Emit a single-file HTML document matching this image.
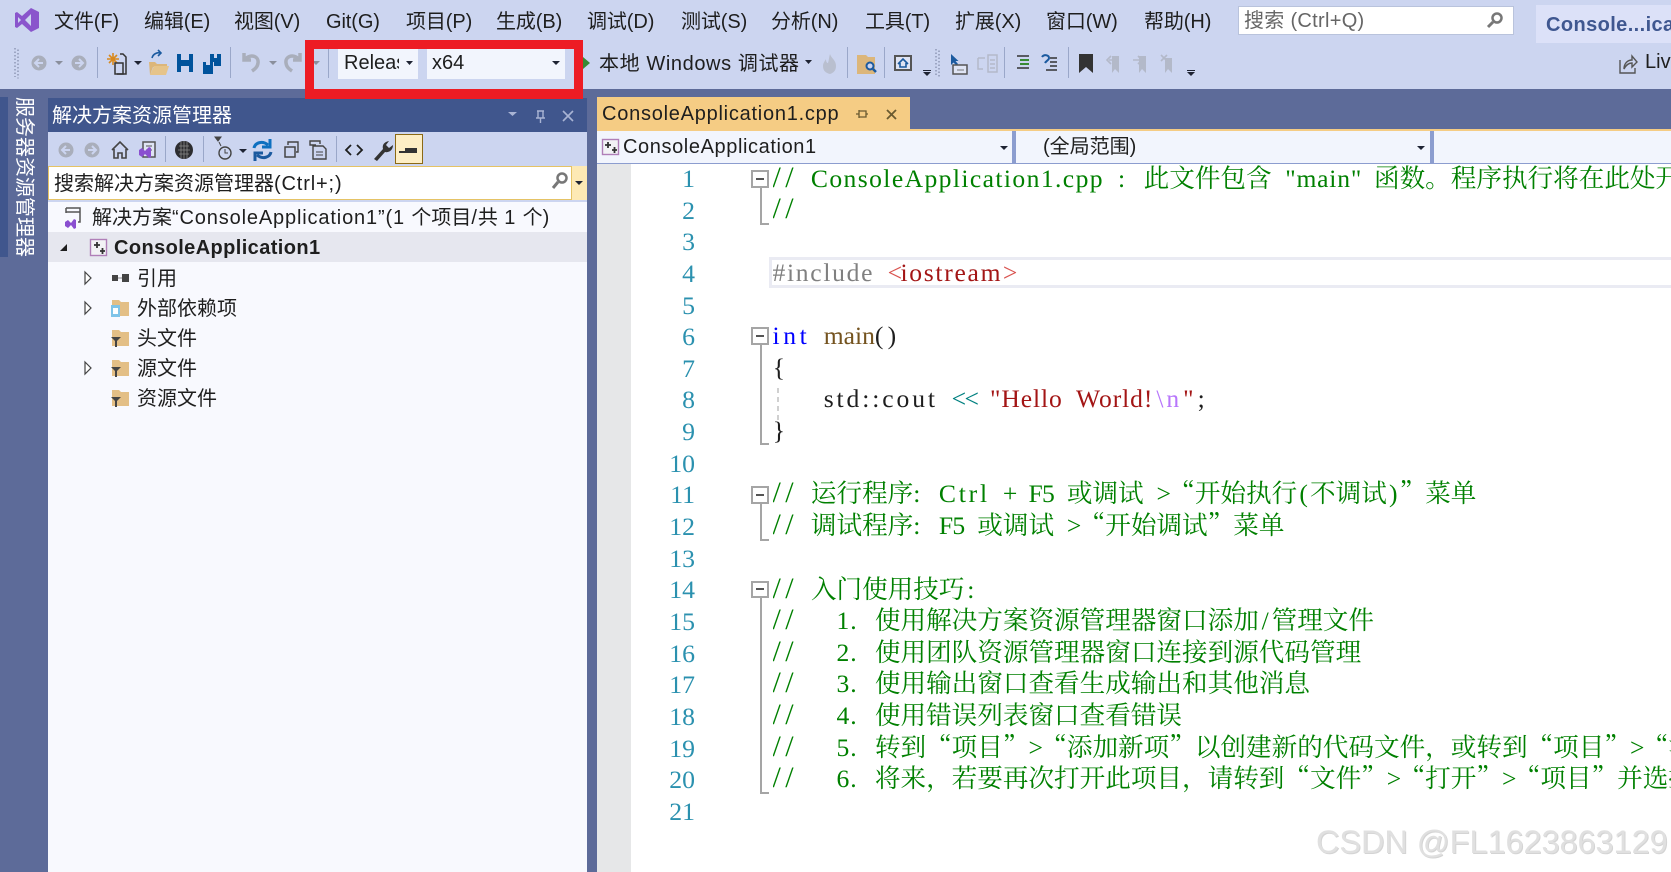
<!DOCTYPE html>
<html lang="zh-CN"><head><meta charset="utf-8"><title>ConsoleApplication1</title>
<style>
html,body{margin:0;padding:0}
body{width:1671px;height:872px;position:relative;overflow:hidden;background:#5d6b99;font-family:"Liberation Sans","Noto Sans CJK SC",sans-serif;font-size:20px;color:#1e1e1e}
.a{position:absolute;white-space:pre}
.t{position:absolute;white-space:pre;height:30px;line-height:30px}
.mn{letter-spacing:-.1px}
.w{letter-spacing:.85px}
.l{position:absolute;left:772.500px;height:32px;line-height:32px;white-space:pre;font-family:"Noto Serif CJK SC","Liberation Serif",serif;font-size:25.6px;color:#008000;width:898px;overflow:hidden}
.l i{display:inline-block;font-family:"Liberation Serif",serif;font-style:normal;word-spacing:6.4px;height:32px;overflow:visible}
.l i.w1{text-align:center}
.l i.s{font-size:30px;letter-spacing:4.4px}
.l i.s.w2{width:25.6px}.l i.s.w3{width:38.4px}.l i.s.w5{width:64px}
.w1{width:1ch}.w2{width:2ch}.w3{width:3ch}.w4{width:4ch}.w5{width:5ch}.w6{width:6ch}.w8{width:8ch}.w9{width:9ch}.w10{width:10ch}.w13{width:13ch}.w23{width:23ch}
.n{position:absolute;left:640px;width:55px;text-align:right;height:32px;line-height:32px;font-family:"Liberation Serif",serif;font-size:25.76px;color:#2b91af}
.k{color:#0000ff}.b{color:#74531f}.d{color:#1e1e1e}.r{color:#a31515}.g{color:#808080}.p{color:#b776fb}.o{color:#008080}.h{color:#d9534f}
</style></head><body>
<div class="a" style="left:0;top:0;width:1671px;height:89px;background:#ccd5f0"></div>
<div class="a" style="left:0;top:97px;width:8px;height:160px;background:#40568d"></div>
<div class="a" style="left:13px;top:97px;width:22px;height:160px;color:#fff;writing-mode:vertical-rl;text-orientation:sideways;line-height:22px;font-size:20px">服务器资源管理器</div>

<div class="t mn" style="left:54px;top:7px">文件(F)</div>
<div class="t mn" style="left:144px;top:7px">编辑(E)</div>
<div class="t mn" style="left:234px;top:7px">视图(V)</div>
<div class="t mn" style="left:326px;top:7px">Git(G)</div>
<div class="t mn" style="left:406px;top:7px">项目(P)</div>
<div class="t mn" style="left:496px;top:7px">生成(B)</div>
<div class="t mn" style="left:587px;top:7px">调试(D)</div>
<div class="t mn" style="left:681px;top:7px">测试(S)</div>
<div class="t mn" style="left:771px;top:7px">分析(N)</div>
<div class="t mn" style="left:865px;top:7px">工具(T)</div>
<div class="t mn" style="left:955px;top:7px">扩展(X)</div>
<div class="t mn" style="left:1046px;top:7px">窗口(W)</div>
<div class="t mn" style="left:1144px;top:7px">帮助(H)</div>
<div class="a" style="left:1238px;top:6px;width:274px;height:27px;background:#fff;border:1px solid #b9c3dc"></div>
<div class="t" style="left:1244px;top:6px;color:#666;letter-spacing:.3px">搜索 (Ctrl+Q)</div>
<div class="a" style="left:1536px;top:5px;width:135px;height:38px;background:#dce1f8"></div>
<div class="t" style="left:1546px;top:10px;font-weight:bold;color:#3f5790;letter-spacing:.4px;width:125px;overflow:hidden">Console...ica</div>

<div class="a" style="left:338px;top:49px;width:80px;height:30px;background:#f2f5fd"></div>
<div class="a" style="left:427px;top:49px;width:138px;height:30px;background:#f2f5fd"></div>
<div class="t" style="left:344px;top:48px;width:55px;overflow:hidden">Release</div>
<div class="t" style="left:432px;top:48px">x64</div>
<div class="t" style="left:599px;top:49px;letter-spacing:.6px">本地 Windows 调试器</div>
<div class="t" style="left:1645px;top:47px;width:26px;overflow:hidden">Live</div>

<div class="a" style="left:48px;top:98px;width:539px;height:34px;background:#40568d"></div>
<div class="a" style="left:52px;top:101px;height:30px;line-height:30px;color:#fff">解决方案资源管理器</div>
<div class="a" style="left:48px;top:132px;width:539px;height:34px;background:#ccd5f0"></div>
<div class="a" style="left:395px;top:134px;width:26px;height:28px;background:#fdeec5;border:1px solid #8b6914"></div>
<div class="a" style="left:48px;top:200px;width:539px;height:672px;background:#f8f9fe"></div>
<div class="a" style="left:48px;top:166px;width:537px;height:32px;background:#fff;border:1px solid #e5c365"></div>
<div class="a" style="left:571px;top:166px;width:16px;height:34px;background:#fde9b4;border-left:1px solid #e5c365;box-sizing:border-box"></div>
<div class="t" style="left:54px;top:169px">搜索解决方案资源管理器<span class="w">(Ctrl+;)</span></div>
<div class="a" style="left:48px;top:200px;width:539px;height:2px;background:#ccd5f0"></div>
<div class="t" style="left:92px;top:203px">解决方案<span class="w">“ConsoleApplication1”(1 </span>个项目<span class="w">/</span>共<span class="w"> 1 </span>个<span class="w">)</span></div>
<div class="a" style="left:48px;top:232px;width:539px;height:30px;background:#e6e7ef"></div>
<div class="t" style="left:114px;top:233px;font-weight:bold;letter-spacing:.4px">ConsoleApplication1</div>
<div class="t" style="left:137px;top:264px">引用</div>
<div class="t" style="left:137px;top:294px">外部依赖项</div>
<div class="t" style="left:137px;top:324px">头文件</div>
<div class="t" style="left:137px;top:354px">源文件</div>
<div class="t" style="left:137px;top:384px">资源文件</div>

<div class="a" style="left:597px;top:97px;width:313px;height:32px;background:#f5cc84"></div>
<div class="t" style="left:602px;top:99px;letter-spacing:.75px">ConsoleApplication1.cpp</div>
<div class="a" style="left:597px;top:129px;width:1074px;height:2px;background:#f5cc84"></div>
<div class="a" style="left:597px;top:131px;width:1074px;height:33px;background:#8c9dcf"></div>
<div class="a" style="left:597px;top:131px;width:415px;height:32px;background:#f2f5fd"></div>
<div class="a" style="left:1016px;top:131px;width:414px;height:32px;background:#f2f5fd"></div>
<div class="a" style="left:1434px;top:131px;width:237px;height:32px;background:#f2f5fd"></div>
<div class="t" style="left:623px;top:132px;letter-spacing:.6px">ConsoleApplication1</div>
<div class="t" style="left:1043px;top:132px">(全局范围)</div>

<div class="a" style="left:597px;top:164px;width:34px;height:708px;background:#e6e7e8"></div>
<div class="a" style="left:631px;top:164px;width:1040px;height:708px;background:#fff"></div>
<div class="a" style="left:769px;top:257px;width:902px;height:25px;border:3px solid #eaebf3;border-right:0"></div>

<div class="n" style="top:163px">1</div><div class="n" style="top:195px">2</div><div class="n" style="top:226px">3</div><div class="n" style="top:258px">4</div><div class="n" style="top:290px">5</div><div class="n" style="top:321px">6</div><div class="n" style="top:353px">7</div><div class="n" style="top:384px">8</div><div class="n" style="top:416px">9</div><div class="n" style="top:448px">10</div><div class="n" style="top:479px">11</div><div class="n" style="top:511px">12</div><div class="n" style="top:543px">13</div><div class="n" style="top:574px">14</div><div class="n" style="top:606px">15</div><div class="n" style="top:638px">16</div><div class="n" style="top:669px">17</div><div class="n" style="top:701px">18</div><div class="n" style="top:733px">19</div><div class="n" style="top:764px">20</div><div class="n" style="top:796px">21</div>

<div class="l" style="top:161px"><i class="s w3">//</i><i class="w23" style="letter-spacing:1.4px">ConsoleApplication1.cpp</i><i class="w3"> :</i>此文件包含<i class="w8" style="letter-spacing:.8px"> "main" </i>函数。程序执行将在此处开始并结束。</div>
<div class="l" style="top:192px"><i class="s w2">//</i></div>
<div class="l" style="top:255px"><i class="g w9" style="letter-spacing:1.7px">#include </i><i class="h w1" style="letter-spacing:-1.6px">&lt;</i><i class="r w8" style="letter-spacing:1.7px">iostream</i><i class="h w1" style="letter-spacing:-1.6px">&gt;</i></div>
<div class="l" style="top:318px"><i class="k w4" style="letter-spacing:3.6px">int</i><i class="b w4">main</i><i class="d w2" style="letter-spacing:4.2px">()</i></div>
<div class="l" style="top:350px"><i class="d w1">{</i></div>
<div class="l" style="top:381px"><i class="w4">&nbsp;</i><i class="d w10" style="letter-spacing:2.9px">std::cout</i><i class="o w3" style="letter-spacing:-1.6px">&lt;&lt;</i><i class="r w13" style="letter-spacing:.9px">"Hello World!</i><i class="p w2" style="letter-spacing:2.8px">\n</i><i class="r w1">"</i><i class="d w1">;</i></div>
<div class="l" style="top:413px"><i class="d w1">}</i></div>
<div class="l" style="top:476px"><i class="s w3">//</i>运行程序<i class="w2">:</i><i class="w5" style="letter-spacing:2.8px">Ctrl</i><i class="w2">+</i><i class="w3" style="letter-spacing:-.7px">F5</i>或调试<i class="w1">&nbsp;</i><i class="w1">&gt;</i>“开始执行<i class="w1">(</i>不调试<i class="w1">)</i>”菜单</div>
<div class="l" style="top:508px"><i class="s w3">//</i>调试程序<i class="w2">:</i><i class="w3" style="letter-spacing:-.7px">F5</i>或调试<i class="w1">&nbsp;</i><i class="w1">&gt;</i>“开始调试”菜单</div>
<div class="l" style="top:572px"><i class="s w3">//</i>入门使用技巧<i class="w1">:</i></div>
<div class="l" style="top:603px"><i class="s w5">//</i><i class="w3" style="letter-spacing:1px">1.</i>使用解决方案资源管理器窗口添加<i class="w1">/</i>管理文件</div>
<div class="l" style="top:635px"><i class="s w5">//</i><i class="w3" style="letter-spacing:1px">2.</i>使用团队资源管理器窗口连接到源代码管理</div>
<div class="l" style="top:666px"><i class="s w5">//</i><i class="w3" style="letter-spacing:1px">3.</i>使用输出窗口查看生成输出和其他消息</div>
<div class="l" style="top:698px"><i class="s w5">//</i><i class="w3" style="letter-spacing:1px">4.</i>使用错误列表窗口查看错误</div>
<div class="l" style="top:730px"><i class="s w5">//</i><i class="w3" style="letter-spacing:1px">5.</i>转到“项目”<i class="w1">&gt;</i>“添加新项”以创建新的代码文件&#65292;或转到“项目”<i class="w1">&gt;</i>“添加现有项”以将现有代码文件添加到项目</div>
<div class="l" style="top:761px"><i class="s w5">//</i><i class="w3" style="letter-spacing:1px">6.</i>将来&#65292;若要再次打开此项目&#65292;请转到“文件”<i class="w1">&gt;</i>“打开”<i class="w1">&gt;</i>“项目”并选择<i class="w6"> .sln </i>文件</div>

<svg class="a" style="left:0;top:0" width="1671" height="872" viewBox="0 0 1671 872" fill="none">
<!-- VS logo -->
<path fill-rule="evenodd" d="M31 8l8 4v16l-8 4-9-8-5 4-2-1V13l2-1 5 4zM18 17v6l3-3zM31 14l-6 6 6 6z" fill="#8a55cc"/>
<!-- grips -->
<g stroke="#8f98b5" stroke-width="1.500" stroke-dasharray="1.500 2"><path d="M15 48v29M18 49.500v29M936 49v28M939 50.500v28"/></g>
<!-- separators -->
<g fill="#9aa7c9"><rect x="97" y="47" width="1" height="31"/><rect x="230" y="47" width="1" height="31"/><rect x="328" y="47" width="1" height="31"/><rect x="847" y="47" width="1" height="31"/><rect x="884" y="47" width="1" height="31"/><rect x="1004" y="47" width="1" height="31"/><rect x="1068" y="47" width="1" height="31"/><rect x="165" y="136" width="1" height="26"/><rect x="203" y="136" width="1" height="26"/><rect x="336" y="136" width="1" height="26"/></g>
<!-- back / forward -->
<g fill="#a9aebb"><circle cx="39" cy="63" r="7.500"/><circle cx="79" cy="63" r="7.500"/><circle cx="66" cy="150" r="7.500"/><circle cx="92" cy="150" r="7.500"/></g>
<g stroke="#ccd5f0" stroke-width="2"><path d="M43 63h-7M39 59l-4 4 4 4M75 63h7M79 59l4 4-4 4M70 150h-7M66 146l-4 4 4 4M88 150h7M92 146l4 4-4 4"/></g>
<!-- small dropdowns -->
<g fill="#8a8f9c"><path d="M55 61h8l-4 4zM269 61h8l-4 4zM312 61h8l-4 4z"/></g>
<g fill="#1e2333"><path d="M134 61h8l-4 4zM239 149h8l-4 4zM406 61h7l-3.500 4zM552 61h8l-4 4zM805 60h7l-3.500 4zM575 181h8l-4 4zM1000 146h8l-4 4zM1417 146h8l-4 4zM923 70h8v1h-8zM923 72h8l-4 4zM1187 70h8v1h-8zM1187 72h8l-4 4z"/></g>
<!-- new project -->
<g><path d="M109 55l8 8M117 55l-8 8M113 53v12M107 59h12" stroke="#d8891e" stroke-width="1.600"/><path d="M120 54h3l3 3v17h-9" stroke="#333" stroke-width="1.500"/><rect x="115" y="63" width="8" height="11" stroke="#333" stroke-width="1.500"/></g>
<!-- open folder -->
<path d="M149 62h6l2 2h10v3h-14l-3 8z" fill="#dcb67a"/><path d="M150 75l4-9h15l-3 9z" fill="#e6c48a"/><path d="M152 58c1-4 5-6 9-5M158 50l3 3-3 3" stroke="#1b5a9f" stroke-width="1.600"/>
<!-- save -->
<path d="M177 54h16v18h-16z" fill="#00539c"/><rect x="181" y="54" width="8" height="6" fill="#ccd5f0"/><rect x="181" y="66" width="8" height="6" fill="#ccd5f0"/>
<path d="M203 62h10v12h-10zM210 54h11v12h-7v-4h-4z" fill="#00539c"/><rect x="206" y="62" width="4" height="3" fill="#ccd5f0"/><rect x="214" y="54" width="3" height="4" fill="#ccd5f0"/>
<!-- undo redo -->
<path d="M244 53v7h7M245 59c7-6 14-2 13 4-.5 4-3 6-6 8" stroke="#a9aebb" stroke-width="3.500"/>
<path d="M300 53v7h-7M299 59c-7-6-14-2-13 4 .5 4 3 6 6 8" stroke="#a9aebb" stroke-width="3.500"/>
<!-- play, flame -->
<path d="M583 57l7 6-7 6z" fill="#388a34"/>
<path d="M830 54c1 4 6 6 6 12 0 5-3 7-6 8-4-1-7-3-7-8 0-3 2-5 3-7 0 3 1 4 2 4 1-3 1-6 2-9z" fill="#b9bfcf"/>
<!-- find folder -->
<path d="M857 55h9l2 2h7v17h-18z" fill="#dcb67a"/><circle cx="870" cy="66" r="3.500" stroke="#1b5a9f" stroke-width="2" fill="#ccd5f0"/><path d="M873 69l3 3" stroke="#1b5a9f" stroke-width="2.500"/>
<!-- home window -->
<rect x="895" y="56" width="16" height="14" fill="#dfe4f4" stroke="#555" stroke-width="2"/><path d="M898 64l5-5 5 5M900 63v4h6v-4" stroke="#1b5a9f" stroke-width="1.600"/>
<!-- cursor and box -->
<path d="M951 54v11l2.500-2.500 3 3 1.500-1.500-2.500-3h3z" fill="#1b5a9f"/><rect x="953" y="65" width="14" height="9" fill="#dfe4f4" stroke="#555" stroke-width="1.500"/><path d="M957 70h7" stroke="#777"/>
<path d="M978 58h7M978 58v11h5M988 55h9v17h-9zM990 60h5M990 64h5M990 68h5" stroke="#b3b9c9" stroke-width="1.500"/>
<!-- format -->
<path d="M1017 56h12M1020 60h9M1020 64h9M1017 68h12" stroke="#333" stroke-width="1.500"/><path d="M1020 60h9M1020 64h9" stroke="#388a34" stroke-width="2"/>
<path d="M1042 57c2-3 7-2 7 1 0 2-3 3-4 5" stroke="#1b5a9f" stroke-width="2"/><path d="M1050 58h7M1050 62h7M1050 66h7M1046 70h11" stroke="#333" stroke-width="1.500"/>
<!-- bookmarks -->
<path d="M1079 54h14v19l-7-6-7 6z" fill="#333"/>
<path d="M1112 56h7v17l-4-4-3 4z" fill="#b3b9c9"/><path d="M1117 60h-8M1111 56l-4 4 4 4" stroke="#b3b9c9" stroke-width="1.600"/>
<path d="M1139 56h7v17l-4-4-3 4z" fill="#b3b9c9"/><path d="M1133 60h8M1138 56l4 4-4 4" stroke="#b3b9c9" stroke-width="1.600"/>
<path d="M1165 58h7v15l-4-4-3 4z" fill="#b3b9c9"/><path d="M1161 55l6 6M1167 55l-6 6" stroke="#b3b9c9" stroke-width="1.600"/>
<!-- search magnifier -->
<circle cx="1497" cy="18" r="4.500" stroke="#777" stroke-width="2.500"/><path d="M1493 22l-5 5" stroke="#777" stroke-width="3"/>
<circle cx="562" cy="178" r="4.500" stroke="#777" stroke-width="2.500"/><path d="M558 182l-5 6" stroke="#777" stroke-width="3"/>
<!-- live share -->
<path d="M1620 60v13h15v-5M1624 69c0-6 4-9 8-9v-4l5 6-5 5v-4c-3 0-6 2-8 6z" stroke="#555" stroke-width="1.400"/>
<!-- panel title icons -->
<path d="M508 112h9l-4.500 4z" fill="#a9b4d4"/>
<path d="M537 111h7M538 111v7h5v-7M536 118h9M540.500 118v5" stroke="#a9b4d4" stroke-width="1.400"/>
<path d="M563 111l10 10M573 111l-10 10" stroke="#a9b4d4" stroke-width="1.600"/>
<!-- panel toolbar -->
<path d="M112 150l8-8 8 8M114 149v9h4v-5h4v5h4v-9" stroke="#444" stroke-width="1.600"/>
<path d="M143 142h12v15h-12z" stroke="#555" stroke-width="1.500" fill="#dfe4f4"/><path d="M146 146h6M146 150h6" stroke="#555"/><path d="M139 150l3-2 3 3 4-4 2 1v9l-2 1-4-4-3 3-3-2z" fill="#8a4fd0"/>
<circle cx="184" cy="150" r="9" fill="#2d2d30"/><path d="M179 146h10M178 150h12M179 154h10M181 142v16M184 141v18M187 142v16" stroke="#888" stroke-width=".8"/>
<path d="M215 137h6l-3 4zM219 142l2 4" stroke="#444" fill="#444"/><circle cx="225" cy="153" r="6" stroke="#444" stroke-width="1.400"/><path d="M225 149v4h3" stroke="#444"/>
<path d="M254 148c1-5 8-8 14-3M270 139v8h-8" stroke="#0e70c0" stroke-width="3"/><path d="M271 152c-1 5-8 8-14 3M255 161v-8h8" stroke="#1b5a9f" stroke-width="3"/>
<rect x="285" y="147" width="10" height="10" stroke="#444" stroke-width="1.500"/><path d="M288 145v-3h10v10h-2" stroke="#444" stroke-width="1.400"/>
<path d="M316 145h-6v-4h10v3M313 146h10l3 3v10h-13z" stroke="#444" stroke-width="1.400"/><path d="M316 152h7M316 155h7" stroke="#444"/>
<path d="M351 145l-5 5 5 5M357 145l5 5-5 5" stroke="#1e1e1e" stroke-width="1.800"/>
<path d="M374 159l9-10c-1-4 1-7 6-8l-3 4 3 3 4-3c0 5-4 8-8 7l-8 9z" fill="#333"/>
<path d="M399 151h6v-3h12v5h-18z" fill="#333"/>
<!-- tree -->
<path d="M66 208h14v14h-2M66 208v5M66 212h14" stroke="#555" stroke-width="1.500"/><path d="M65 222l3-2 3 3 3-4 2 1v8l-2 1-3-4-3 3-3-2z" fill="#8a4fd0"/>
<path d="M60 251l7-7v7z" fill="#1e1e1e"/>
<rect x="90.500" y="239.500" width="16" height="16" fill="#f2f2f5" stroke="#b07fb8" stroke-width="1.400"/><path d="M94 245h6M97 242v6M100 251h5M102.500 248v6" stroke="#333" stroke-width="1.800"/>
<path d="M85 272l6 6-6 6zM85 302l6 6-6 6zM85 362l6 6-6 6z" stroke="#444" stroke-width="1.200" fill="#fff"/>
<rect x="112" y="275" width="6" height="6" fill="#444"/><rect x="122" y="274" width="7" height="8" fill="#444"/><path d="M118 278h4" stroke="#888"/>
<path d="M112 300h7l2 2h8v14h-17z" fill="#e3bf86"/><rect x="111" y="305" width="9" height="12" fill="#7fc4e8"/><rect x="113" y="308" width="5" height="6" fill="#fff"/>
<path d="M112 330h7l2 2h8v14h-17z" fill="#e3bf86"/><path d="M111 337h10l-4 4v6h-2v-6z" fill="#444"/>
<path d="M112 360h7l2 2h8v14h-17z" fill="#e3bf86"/><path d="M111 367h10l-4 4v6h-2v-6z" fill="#444"/>
<path d="M112 390h7l2 2h8v14h-17z" fill="#e3bf86"/><path d="M111 397h10l-4 4v6h-2v-6z" fill="#444"/>
<!-- tab icons -->
<path d="M859 110v8M859 114h-3M859 111h7v6h-7M866 114h2" stroke="#6a5a30" stroke-width="1.300"/>
<path d="M887 110l9 9M896 110l-9 9" stroke="#6a5a30" stroke-width="1.800"/>
<!-- nav icon -->
<rect x="602.500" y="139.500" width="16" height="15" fill="#f2f2f5" stroke="#b07fb8" stroke-width="1.400"/><path d="M605 145h6M608 142v6M612 150h5M614.500 147v6" stroke="#333" stroke-width="1.800"/>
<!-- outlining -->
<g stroke="#a5a5a5" stroke-width="2">
<rect x="752" y="171" width="16" height="16" fill="#fff"/><rect x="752" y="328" width="16" height="16" fill="#fff"/><rect x="752" y="487" width="16" height="16" fill="#fff"/><rect x="752" y="582" width="16" height="15" fill="#fff"/>
<path d="M761 188v36h8M761 345v99h8M761 504v36h8M761 598v195h8"/>
</g>
<path d="M756 179h8M756 336h8M756 495h8M756 589h8" stroke="#555" stroke-width="2"/>
<path d="M778 388v32" stroke="#c0c0c0" stroke-width="1.500" stroke-dasharray="5 4"/>
</svg>

<div class="a" style="left:1316px;top:822px;font-family:'Liberation Sans',sans-serif;font-size:32.4px;line-height:40px;color:#e0e0e0;text-shadow:1px 1px 0 #d4d4d4">CSDN @FL1623863129</div>

<div class="a" style="left:305px;top:40px;width:260px;height:40px;border:solid #ed1c24;border-width:9px 9px 10px 9px"></div>
</body></html>
